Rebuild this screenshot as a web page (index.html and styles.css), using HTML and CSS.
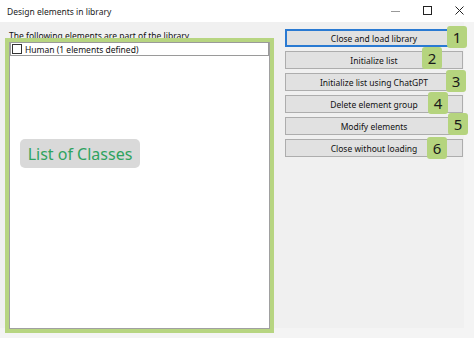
FILE: index.html
```html
<!DOCTYPE html>
<html>
<head>
<meta charset="utf-8">
<link rel="stylesheet" href="styles.css">
</head>
<body>
<div class="window">
  <div class="titlebar">
    <span class="title">Design elements in library</span>
    <div class="controls">
      <span class="ctl"><svg width="10" height="10" viewBox="0 0 10 10"><path d="M0 5.5h9" stroke="#999" stroke-width="1"/></svg></span>
      <span class="ctl"><svg width="10" height="10" viewBox="0 0 10 10"><rect x="0.5" y="0.5" width="8" height="8" fill="none" stroke="#222" stroke-width="1"/></svg></span>
      <span class="ctl"><svg width="10" height="10" viewBox="0 0 10 10"><path d="M0.5 0.5l8 8M8.5 0.5l-8 8" stroke="#222" stroke-width="1"/></svg></span>
    </div>
  </div>
  <div class="content">
    <div class="left">
      <div class="label">The following elements are part of the library</div>
      <div class="frame">
        <div class="listbox">
          <div class="row"><span class="check"></span><span>Human (1 elements defined)</span></div>
        </div>
        <div class="callout">List of Classes</div>
      </div>
    </div>
    <div class="right">
      <div class="btn focused">Close and load library<span class="num n1">1</span></div>
      <div class="btn">Initialize list<span class="num n2">2</span></div>
      <div class="btn">Initialize list using ChatGPT<span class="num n3">3</span></div>
      <div class="btn">Delete element group<span class="num n4">4</span></div>
      <div class="btn">Modify elements<span class="num n5">5</span></div>
      <div class="btn">Close without loading<span class="num n6">6</span></div>
    </div>
  </div>
</div>
</body>
</html>
```
FILE: styles.css
```css
html, body {
  margin: 0;
  padding: 0;
}
body {
  width: 474px;
  height: 338px;
  overflow: hidden;
  background: #f4f4f4;
  font-family: "Noto Sans", "Open Sans", sans-serif;
  color: #111;
}
.window {
  width: 474px;
  height: 338px;
}
.titlebar {
  height: 22px;
  background: #ffffff;
  display: flex;
  align-items: center;
  justify-content: space-between;
}
.title {
  padding-left: 7px;
  font-size: 8.5px;
  color: #222;
}
.controls {
  display: flex;
  align-items: center;
  margin-right: -2px;
}
.ctl {
  width: 32px;
  display: flex;
  justify-content: center;
  align-items: center;
}
.content {
  height: 306px;
  width: 464px;
  background: #f0f0f0;
  display: flex;
}
.left {
  padding-left: 5px;
  padding-top: 8px;
  width: 269px;
}
.label {
  font-size: 8.5px;
  line-height: 11px;
  height: 9px;
  margin-bottom: -1px;
  overflow: hidden;
  padding-left: 4px;
  color: #111;
}
.frame {
  position: relative;
  height: 287px;
  border: 4px solid #b7d581;
  box-sizing: content-box;
  width: 261px;
}
.listbox {
  height: 100%;
  background: #ffffff;
  border: 1px solid #a0a0a0;
  border-top: none;
  box-sizing: border-box;
}
.row {
  height: 12px;
  border: 1px solid #9a9a9a;
  display: flex;
  align-items: center;
  gap: 3px;
  padding-left: 1px;
  font-size: 8.5px;
  color: #111;
}
.check {
  width: 8px;
  height: 8px;
  border: 1px solid #333;
  background: #fff;
}
.callout {
  position: absolute;
  left: 11px;
  top: 97px;
  width: 120px;
  height: 29px;
  border-radius: 5px;
  background: #d9d9d9;
  color: #2fa35f;
  font-size: 16px;
  display: flex;
  align-items: center;
  justify-content: center;
}
.right {
  padding-left: 11px;
  padding-top: 7px;
  display: flex;
  flex-direction: column;
  gap: 4px;
}
.btn {
  position: relative;
  width: 178px;
  height: 18px;
  box-sizing: border-box;
  border: 1px solid #adadad;
  background: #e1e1e1;
  font-size: 8.5px;
  display: flex;
  align-items: center;
  justify-content: center;
  color: #111;
}
.btn.focused {
  border: 2px solid #2a7ad2;
}
.num {
  position: absolute;
  width: 20px;
  height: 22px;
  border-radius: 3px;
  background: #b5d47e;
  color: #1a1a1a;
  font-size: 15px;
  display: flex;
  align-items: center;
  justify-content: center;
}
.n1 { left: 160px; top: -5px; }
.n2 { left: 136px; top: -5px; }
.n3 { left: 160px; top: -4px; }
.n4 { left: 142px; top: -4px; }
.n5 { left: 162px; top: -5px; }
.n6 { left: 141px; top: -3px; }
```
